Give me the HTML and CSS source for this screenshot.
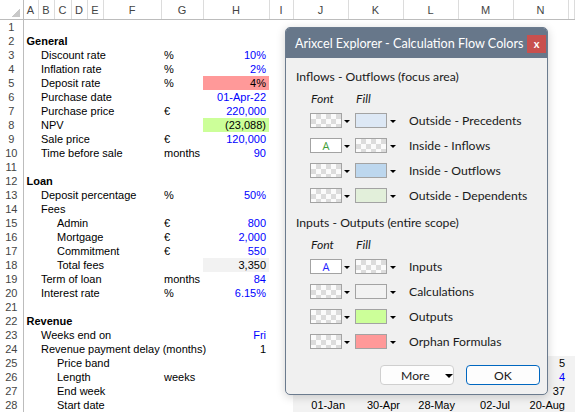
FILE: index.html
```html
<!DOCTYPE html>
<html lang="en">
<head>
    <meta charset="UTF-8">
    <meta name="viewport" content="width=device-width, initial-scale=1.0">
    <title>Calculation Flow Colors</title>
    <link rel="stylesheet" href="styles.css">
</head>
<body>

<!-- Worksheet -->
<table class="sheet">
    <colgroup>
        <col class="col-rh"><col class="col-a"><col class="col-b"><col class="col-c"><col class="col-d"><col class="col-e">
        <col class="col-f"><col class="col-g"><col class="col-h"><col class="col-i">
        <col class="col-wide"><col class="col-wide"><col class="col-wide"><col class="col-wide"><col class="col-wide"><col>
    </colgroup>
    <tr class="colhead">
        <th class="corner"></th><th>A</th><th>B</th><th>C</th><th>D</th><th>E</th><th>F</th><th>G</th><th>H</th><th>I</th>
        <th>J</th><th>K</th><th>L</th><th>M</th><th>N</th><th></th>
    </tr>
    <tr><th>1</th><td colspan="15"></td></tr>
    <tr><th>2</th><td colspan="6" class="head">General</td><td colspan="9"></td></tr>
    <tr><th>3</th><td></td><td colspan="5">Discount rate</td><td>%</td><td class="num input">10%</td><td colspan="7"></td></tr>
    <tr><th>4</th><td></td><td colspan="5">Inflation rate</td><td>%</td><td class="num input">2%</td><td colspan="7"></td></tr>
    <tr><th>5</th><td></td><td colspan="5">Deposit rate</td><td>%</td><td class="num orphan">4%</td><td colspan="7"></td></tr>
    <tr><th>6</th><td></td><td colspan="5">Purchase date</td><td></td><td class="num input">01-Apr-22</td><td colspan="7"></td></tr>
    <tr><th>7</th><td></td><td colspan="5">Purchase price</td><td>€</td><td class="num input">220,000</td><td colspan="7"></td></tr>
    <tr><th>8</th><td></td><td colspan="5">NPV</td><td></td><td class="num output">(23,088)</td><td colspan="7"></td></tr>
    <tr><th>9</th><td></td><td colspan="5">Sale price</td><td>€</td><td class="num input">120,000</td><td colspan="7"></td></tr>
    <tr><th>10</th><td></td><td colspan="5">Time before sale</td><td>months</td><td class="num input">90</td><td colspan="7"></td></tr>
    <tr><th>11</th><td colspan="15"></td></tr>
    <tr><th>12</th><td colspan="6" class="head">Loan</td><td colspan="9"></td></tr>
    <tr><th>13</th><td></td><td colspan="5">Deposit percentage</td><td>%</td><td class="num input">50%</td><td colspan="7"></td></tr>
    <tr><th>14</th><td></td><td colspan="5">Fees</td><td></td><td></td><td colspan="7"></td></tr>
    <tr><th>15</th><td colspan="2"></td><td colspan="4">Admin</td><td>€</td><td class="num input">800</td><td colspan="7"></td></tr>
    <tr><th>16</th><td colspan="2"></td><td colspan="4">Mortgage</td><td>€</td><td class="num input">2,000</td><td colspan="7"></td></tr>
    <tr><th>17</th><td colspan="2"></td><td colspan="4">Commitment</td><td>€</td><td class="num input">550</td><td colspan="7"></td></tr>
    <tr><th>18</th><td colspan="2"></td><td colspan="4">Total fees</td><td></td><td class="num calc">3,350</td><td colspan="7"></td></tr>
    <tr><th>19</th><td></td><td colspan="5">Term of loan</td><td>months</td><td class="num input">84</td><td colspan="7"></td></tr>
    <tr><th>20</th><td></td><td colspan="5">Interest rate</td><td>%</td><td class="num input">6.15%</td><td colspan="7"></td></tr>
    <tr><th>21</th><td colspan="15"></td></tr>
    <tr><th>22</th><td colspan="6" class="head">Revenue</td><td colspan="9"></td></tr>
    <tr><th>23</th><td></td><td colspan="5">Weeks end on</td><td></td><td class="num input">Fri</td><td colspan="7"></td></tr>
    <tr><th>24</th><td></td><td colspan="6">Revenue payment delay (months)</td><td class="num">1</td><td colspan="7"></td></tr>
    <tr><th>25</th><td colspan="2"></td><td colspan="4">Price band</td><td></td><td></td><td></td>
        <td class="calc" colspan="4"></td><td class="num calc">5</td><td class="calc"></td></tr>
    <tr><th>26</th><td colspan="2"></td><td colspan="4">Length</td><td>weeks</td><td></td><td></td>
        <td class="calc" colspan="4"></td><td class="num calc input">4</td><td class="calc"></td></tr>
    <tr><th>27</th><td colspan="2"></td><td colspan="4">End week</td><td></td><td></td><td></td>
        <td class="calc" colspan="4"></td><td class="num calc">37</td><td class="calc"></td></tr>
    <tr><th>28</th><td colspan="2"></td><td colspan="4">Start date</td><td></td><td></td><td></td>
        <td class="num calc">01-Jan</td><td class="num calc">30-Apr</td><td class="num calc">28-May</td>
        <td class="num calc">02-Jul</td><td class="num calc">20-Aug</td><td class="calc"></td></tr>
</table>

<!-- Calculation flow colors dialog -->
<div class="dialog">
    <div class="dialog-title">
        <span>Arixcel Explorer - Calculation Flow Colors</span>
        <span class="close-btn">x</span>
    </div>
    <div class="dialog-body">
        <div class="group-title">Inflows - Outflows (focus area)</div>
        <div class="col-labels"><span class="lbl-font">Font</span><span>Fill</span></div>

        <div class="color-row">
            <span class="swatch checker"></span><span class="drop"></span>
            <span class="swatch fill-precedents"></span><span class="drop drop-fill"></span>
            <span class="row-label">Outside - Precedents</span>
        </div>
        <div class="color-row">
            <span class="swatch font-a font-inflow">A</span><span class="drop"></span>
            <span class="swatch checker"></span><span class="drop drop-fill"></span>
            <span class="row-label">Inside - Inflows</span>
        </div>
        <div class="color-row">
            <span class="swatch checker"></span><span class="drop"></span>
            <span class="swatch fill-outflows"></span><span class="drop drop-fill"></span>
            <span class="row-label">Inside - Outflows</span>
        </div>
        <div class="color-row">
            <span class="swatch checker"></span><span class="drop"></span>
            <span class="swatch fill-dependents"></span><span class="drop drop-fill"></span>
            <span class="row-label">Outside - Dependents</span>
        </div>

        <div class="group-title second">Inputs - Outputs (entire scope)</div>
        <div class="col-labels"><span class="lbl-font">Font</span><span>Fill</span></div>

        <div class="color-row">
            <span class="swatch font-a font-input">A</span><span class="drop"></span>
            <span class="swatch checker"></span><span class="drop drop-fill"></span>
            <span class="row-label">Inputs</span>
        </div>
        <div class="color-row">
            <span class="swatch checker"></span><span class="drop"></span>
            <span class="swatch fill-calc"></span><span class="drop drop-fill"></span>
            <span class="row-label">Calculations</span>
        </div>
        <div class="color-row">
            <span class="swatch checker"></span><span class="drop"></span>
            <span class="swatch fill-output"></span><span class="drop drop-fill"></span>
            <span class="row-label">Outputs</span>
        </div>
        <div class="color-row">
            <span class="swatch checker"></span><span class="drop"></span>
            <span class="swatch fill-orphan"></span><span class="drop drop-fill"></span>
            <span class="row-label">Orphan Formulas</span>
        </div>

        <div class="dialog-buttons">
            <button class="btn btn-more">More<span class="drop"></span></button>
            <button class="btn btn-ok">OK</button>
        </div>
    </div>
</div>

</body>
</html>
```

FILE: styles.css
```css
body {
    margin: 0;
    background: #fff;
    font-family: "Liberation Sans", Arial, sans-serif;
    overflow: hidden;
}

/* worksheet */

.sheet {
    width: 575px;
    table-layout: fixed;
    border-collapse: collapse;
    font-size: 11px;
    color: #000;
}

.col-rh { width: 23px; }
.col-a { width: 15px; }
.col-b { width: 16px; }
.col-c { width: 17px; }
.col-d { width: 16px; }
.col-e { width: 16px; }
.col-f { width: 58px; }
.col-g { width: 42px; }
.col-h { width: 66px; }
.col-i { width: 24px; }
.col-wide { width: 55px; }

.sheet td {
    height: 14px;
    padding: 0 3px;
    line-height: 14px;
    white-space: nowrap;
    overflow: visible;
}

.sheet th {
    font-weight: normal;
    color: #444;
    padding: 0;
}

.colhead th {
    height: 18px;
    padding-top: 1px;
    line-height: 17px;
    border-right: 1px solid #dcdcdc;
    border-bottom: 1px solid #bcbcbc;
}

.sheet tr th:first-child {
    border-right: 1px solid #bcbcbc;
    text-align: center;
}

.corner {
    background: linear-gradient(135deg, transparent 50%, #c9c9c9 50%) no-repeat right 3px bottom 2px / 9px 9px;
}

.head {
    font-weight: bold;
}

.num {
    text-align: right;
}

.input {
    color: #0000ff;
}

.orphan { background: #ff9999; }
.output { background: #ccff99; }
.calc { background: #f2f2f2; }

/* dialog */

.dialog {
    position: absolute;
    left: 285px;
    top: 27px;
    width: 263px;
    height: 368px;
    box-sizing: border-box;
    border: 1px solid #6b7b8e;
    border-radius: 5px;
    background: #f0f0f0;
    box-shadow: 0 2px 10px rgba(0, 0, 0, 0.18);
    font-family: Lato, "Open Sans", sans-serif;
    font-size: 12.2px;
    color: #1a1a1a;
    overflow: hidden;
}

.dialog-title {
    height: 30px;
    display: flex;
    align-items: center;
    justify-content: space-between;
    padding-left: 9px;
    background: #67778a;
    color: #fff;
    font-size: 12.6px;
    white-space: nowrap;
}

.close-btn {
    width: 19px;
    height: 18px;
    margin-right: 1px;
    margin-top: 2px;
    background: #c8504e;
    color: #fff;
    font-weight: bold;
    font-size: 11px;
    line-height: 17px;
    text-align: center;
}

.dialog-body {
    padding: 11px 0 0 10px;
}

.group-title {
    line-height: 16px;
}

.group-title.second {
    margin-top: 12px;
}

.col-labels {
    margin-top: 7px;
    padding-left: 15px;
    line-height: 14px;
    font-style: italic;
}

.lbl-font {
    display: inline-block;
    width: 45px;
}

.color-row {
    display: flex;
    align-items: center;
    height: 15px;
    margin-top: 10px;
    padding-left: 14px;
}

.col-labels + .color-row {
    margin-top: 7px;
}

.swatch {
    width: 32px;
    height: 15px;
    box-sizing: border-box;
    border: 1px solid #a3a3a3;
    background: #fff;
}

.checker {
    background: repeating-conic-gradient(#dcdcdc 0 25%, #fbfbfb 0 50%) 0 0 / 10px 10px;
}

.font-a {
    font-family: "Open Sans", sans-serif;
    font-size: 11px;
    line-height: 13px;
    text-align: center;
}

.font-inflow { color: #3f9e3a; }
.font-input { color: #2323ff; }

.fill-precedents { background: #dde8f5; }
.fill-outflows { background: #bdd7ee; }
.fill-dependents { background: #e2efda; }
.fill-calc { background: #f2f2f2; }
.fill-output { background: #ccff99; }
.fill-orphan { background: #ff9999; }

.drop {
    display: inline-block;
    width: 0;
    height: 0;
    margin: 1px 5px 0 2px;
    border-left: 3px solid transparent;
    border-right: 3px solid transparent;
    border-top: 3px solid #000;
}

.drop-fill {
    margin: 1px 0 0 3px;
}

.row-label {
    margin-left: 13px;
}

.dialog-buttons {
    display: flex;
    justify-content: flex-end;
    gap: 12px;
    margin-top: 16px;
    padding-right: 7px;
}

.btn {
    width: 74px;
    height: 20px;
    box-sizing: border-box;
    border-radius: 4px;
    background: #fdfdfd;
    font-family: Lato, "Open Sans", sans-serif;
    font-size: 12.2px;
    color: #1a1a1a;
    padding: 0;
}

.btn-more {
    display: flex;
    align-items: center;
    border: 1px solid #cfcfcf;
    padding-left: 20px;
    white-space: nowrap;
}

.btn-more .drop {
    margin: 1px 0 0 15px;
    border-left-width: 4px;
    border-right-width: 4px;
    border-top-width: 4px;
}

.btn-ok {
    border: 1px solid #0067c0;
}
```
